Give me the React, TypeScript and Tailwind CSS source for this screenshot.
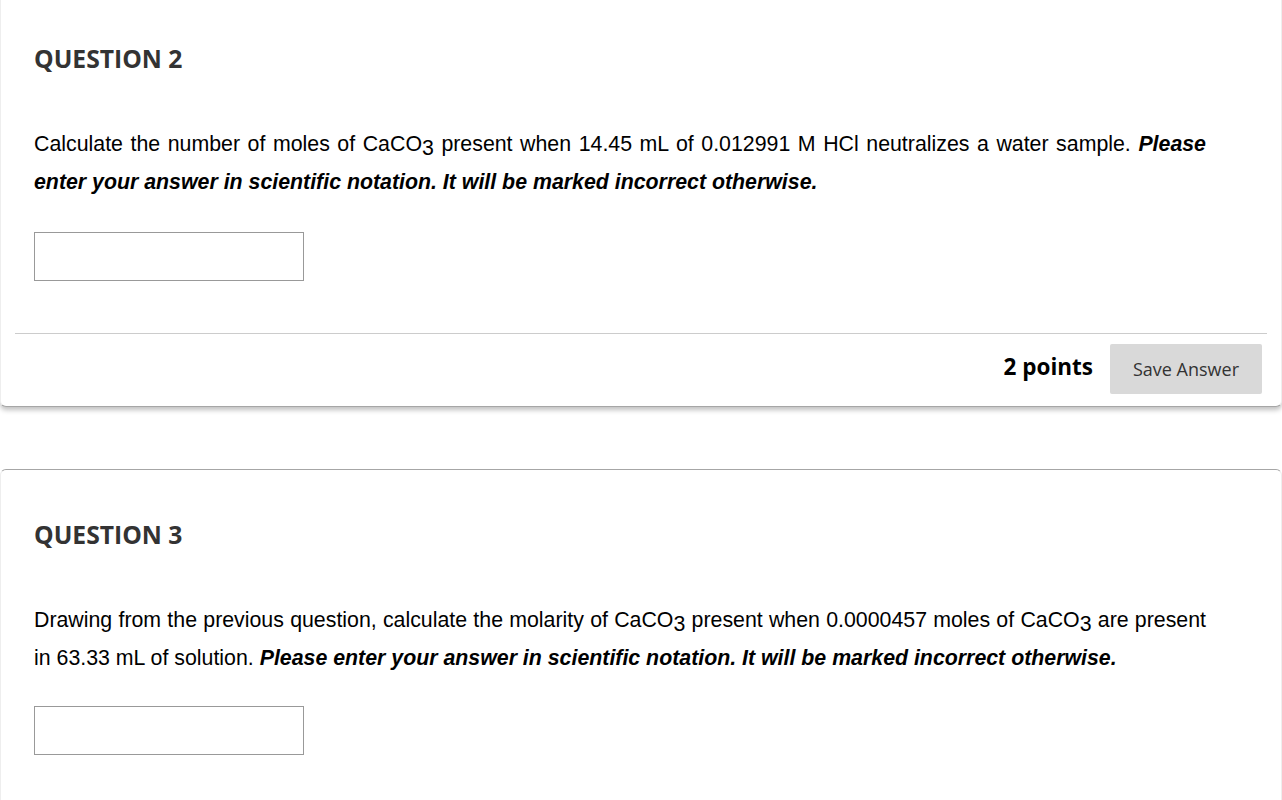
import React from 'react';

const Sub3: React.FC = () => <span className="relative top-[4px]">3</span>;

const AnswerBox: React.FC = () => (
  <input
    type="text"
    className="block w-[270px] h-[49px] border border-[#999999] bg-white outline-none"
  />
);

const App: React.FC = () => {
  return (
    <div className="min-h-screen bg-white overflow-hidden">
      {/* Question 2 card (top is scrolled out of view) */}
      <div className="-mt-[6px] rounded-[6px] border border-t-0 border-x-[#eeeeee] border-b-[#a6a6a6] bg-white shadow-[0_3px_5px_rgba(0,0,0,0.25)]">
        <div className="pl-[33px] pr-[75px] pt-[49px]">
          <h2 className="font-['Open_Sans',sans-serif] font-bold text-[24.7px] leading-[32px] text-[#333333]">
            QUESTION 2
          </h2>
          <p className="mt-[50px] font-['Liberation_Sans',Arial,sans-serif] text-[21.33px] leading-[38px] text-black text-justify">
            Calculate the number of moles of CaCO<Sub3 /> present when 14.45 mL of 0.012991 M HCl neutralizes a water sample.{' '}
            <strong className="italic font-bold">
              Please enter your answer in scientific notation. It will be marked incorrect otherwise.
            </strong>
          </p>
          <div className="mt-[31px] pb-[52px]">
            <AnswerBox />
          </div>
        </div>
        <div className="mx-[14px] border-t border-[#cccccc] pt-[10px] pb-[12px] pr-[5px] flex items-center justify-end gap-[17px]">
          <span className="mb-[4px] font-['Open_Sans',sans-serif] font-bold text-[22.5px] text-black">2 points</span>
          <button className="w-[152px] h-[50px] rounded-[2px] bg-[#d9d9d9] font-['Open_Sans',sans-serif] text-[18px] text-[#333333]">
            Save Answer
          </button>
        </div>
      </div>

      {/* Question 3 card */}
      <div className="mt-[62px] rounded-[6px] border border-[#a6a6a6] border-x-[#eeeeee] bg-white">
        <div className="pl-[33px] pr-[75px] pt-[49px]">
          <h2 className="font-['Open_Sans',sans-serif] font-bold text-[24.7px] leading-[32px] text-[#333333]">
            QUESTION 3
          </h2>
          <p className="mt-[50px] font-['Liberation_Sans',Arial,sans-serif] text-[21.33px] leading-[38px] text-black text-justify">
            Drawing from the previous question, calculate the molarity of CaCO<Sub3 /> present when 0.0000457 moles of CaCO<Sub3 /> are present in 63.33 mL of solution.{' '}
            <strong className="italic font-bold">
              Please enter your answer in scientific notation. It will be marked incorrect otherwise.
            </strong>
          </p>
          <div className="mt-[29px] pb-[60px]">
            <AnswerBox />
          </div>
        </div>
      </div>
    </div>
  );
};

export default App;
